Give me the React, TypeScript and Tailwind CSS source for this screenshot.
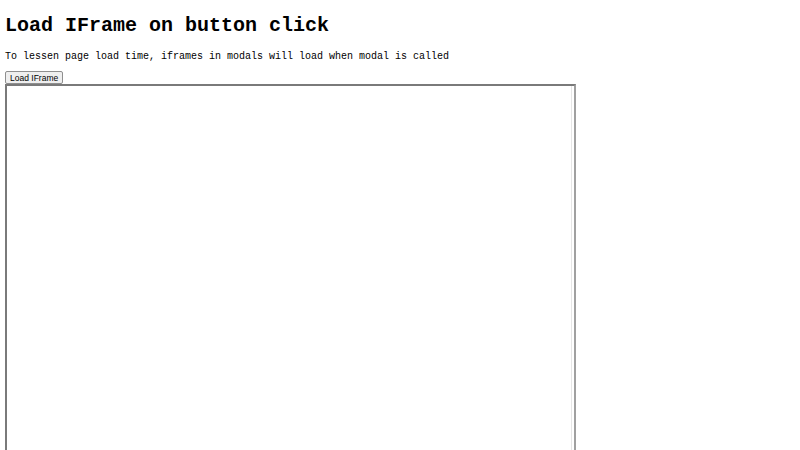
import React, { useState } from 'react';

const App: React.FC = () => {
  const [loaded, setLoaded] = useState(false);

  return (
    <div className="min-h-[450px] bg-white px-[5px] pt-[14px] font-['Liberation_Mono',monospace] text-black">
      <h1 className="mb-[14px] text-[20px] font-bold leading-[23px]">Load IFrame on button click</h1>
      <p className="mb-[8px] text-[10px] leading-[12px]">
        To lessen page load time, iframes in modals will load when modal is called
      </p>

      <button
        onClick={() => setLoaded(true)}
        className="block h-[13px] rounded-[2px] border border-[#8f8f8f] bg-[#efefef] px-[4px] font-['Liberation_Sans',Arial,sans-serif] text-[8.5px] leading-[10px] text-black"
      >
        Load IFrame
      </button>

      <div className="flex h-[380px] w-[571px] border-2 border-t-[#7a7a7a] border-l-[#7a7a7a] border-r-[#a0a0a0] border-b-[#c8c8c8] bg-white">
        <div className="flex-1">{loaded ? null : null}</div>
        <div className="w-[3px] border-l border-[#e6e6e6]" />
      </div>
    </div>
  );
};

export default App;
